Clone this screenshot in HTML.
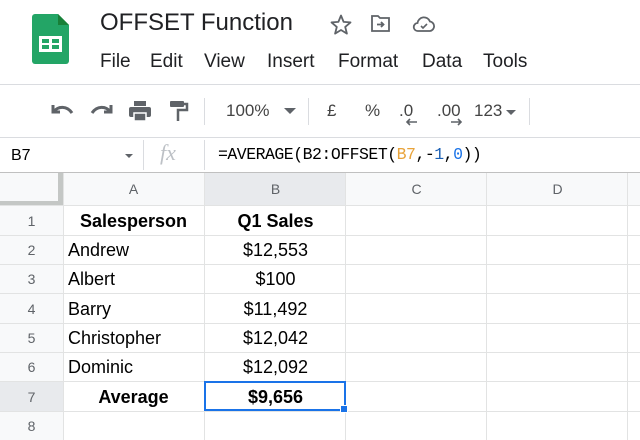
<!DOCTYPE html>
<html><head><style>
*{margin:0;padding:0;box-sizing:border-box}
body{width:640px;height:440px;overflow:hidden;background:#fff;font-family:"Liberation Sans",Arial,sans-serif;position:relative;color:#000}
.a{position:absolute}
.menu span{position:absolute;top:51px;font-size:19px;color:#202124}
.tb{color:#5f6368;font-size:16px}
.cell{position:absolute;font-size:18px;line-height:29px;white-space:nowrap}
.hl{position:absolute;background:#e2e3e3}
</style></head><body>
<svg class="a" style="left:32px;top:14px" width="37" height="50" viewBox="0 0 37 50">
<path d="M3 0H26L37 11V47A3 3 0 0 1 34 50H3A3 3 0 0 1 0 47V3A3 3 0 0 1 3 0Z" fill="#23a566"/>
<path d="M26 0V11H37Z" fill="#188038"/>
<rect x="7" y="22" width="23" height="16" fill="#fff"/>
<rect x="10" y="25" width="7" height="4" fill="#23a566"/><rect x="20" y="25" width="7" height="4" fill="#23a566"/>
<rect x="10" y="31" width="7" height="4" fill="#23a566"/><rect x="20" y="31" width="7" height="4" fill="#23a566"/>
</svg>
<div class="a" style="left:100px;top:9px;font-size:24px;color:#202124">OFFSET Function</div>
<svg class="a" style="left:329px;top:13px" width="24" height="24" viewBox="0 0 24 24"><path d="M12 2.5l2.6 6.4 6.9.5-5.3 4.5 1.7 6.7L12 17l-5.9 3.6 1.7-6.7L2.5 9.4l6.9-.5z" fill="none" stroke="#5f6368" stroke-width="1.8" stroke-linejoin="round"/></svg>
<svg class="a" style="left:370px;top:14px" width="22" height="20" viewBox="0 0 22 20"><path d="M2 2h6l2 2h9v13H2z" fill="none" stroke="#5f6368" stroke-width="1.8"/><path d="M7 10.5h6M11 8l2.5 2.5L11 13" stroke="#5f6368" stroke-width="1.8" fill="none"/></svg>
<svg class="a" style="left:412px;top:14px" width="24" height="20" viewBox="0 0 24 20"><path d="M6 17a4 4 0 0 1-.5-8A6.5 6.5 0 0 1 18 7.5a4.8 4.8 0 0 1 0 9.5z" fill="none" stroke="#5f6368" stroke-width="1.8"/><path d="M9 12l2 2 4-4" stroke="#5f6368" stroke-width="1.6" fill="none"/></svg>
<div class="menu">
<span style="left:100px">File</span><span style="left:150px">Edit</span><span style="left:204px">View</span><span style="left:267px">Insert</span><span style="left:338px">Format</span><span style="left:422px">Data</span><span style="left:483px">Tools</span>
</div>
<div class="a" style="left:0;top:84px;width:640px;height:1px;background:#dadce0"></div>
<svg class="a" style="left:49px;top:101px" width="26" height="18" viewBox="0 0 26 18"><path d="M4 4v7h7" fill="none" stroke="#5f6368" stroke-width="3"/><path d="M5 10.5C9 5 18 4.5 23 12" fill="none" stroke="#5f6368" stroke-width="3"/></svg>
<svg class="a" style="left:89px;top:101px" width="26" height="18" viewBox="0 0 26 18"><path d="M22 4v7h-7" fill="none" stroke="#5f6368" stroke-width="3"/><path d="M21 10.5C17 5 8 4.5 3 12" fill="none" stroke="#5f6368" stroke-width="3"/></svg>
<svg class="a" style="left:128px;top:100px" width="24" height="22" viewBox="0 0 24 22"><rect x="6" y="1" width="12" height="5" fill="#5f6368"/><rect x="1" y="7" width="22" height="10" rx="2" fill="#5f6368"/><rect x="6" y="13" width="12" height="8" fill="#5f6368" stroke="#fff" stroke-width="1.5"/></svg>
<svg class="a" style="left:169px;top:100px" width="20" height="22" viewBox="0 0 20 22"><rect x="1" y="1" width="14" height="6" rx="1" fill="#5f6368"/><path d="M15 4h3v6H9v11" fill="none" stroke="#5f6368" stroke-width="2.5"/></svg>
<div class="a" style="left:204px;top:98px;width:1px;height:27px;background:#dadce0"></div>
<div class="a tb" style="left:226px;top:101px;font-size:17px;color:#444">100%</div>
<svg class="a" style="left:284px;top:108px" width="12" height="7"><path d="M0 0h12L6 6z" fill="#5f6368"/></svg>
<div class="a" style="left:308px;top:98px;width:1px;height:27px;background:#dadce0"></div>
<div class="a tb" style="left:327px;top:101px;font-size:17px;color:#444">£</div>
<div class="a tb" style="left:365px;top:101px;font-size:17px;color:#444">%</div>
<div class="a tb" style="left:399px;top:101px;font-size:17px;color:#444">.0</div>
<svg class="a" style="left:405px;top:118px" width="12" height="8"><path d="M12 4H2M5 1L2 4l3 3" stroke="#5f6368" stroke-width="1.6" fill="none"/></svg>
<div class="a tb" style="left:437px;top:101px;font-size:17px;color:#444">.00</div>
<svg class="a" style="left:451px;top:118px" width="12" height="8"><path d="M0 4h10M7 1l3 3-3 3" stroke="#5f6368" stroke-width="1.6" fill="none"/></svg>
<div class="a tb" style="left:474px;top:101px;font-size:17px;color:#444">123</div>
<svg class="a" style="left:506px;top:110px" width="10" height="6"><path d="M0 0h10L5 5z" fill="#5f6368"/></svg>
<div class="a" style="left:529px;top:98px;width:1px;height:27px;background:#dadce0"></div>
<div class="a" style="left:0;top:137px;width:640px;height:1px;background:#dadce0"></div>
<div class="a" style="left:11px;top:147px;font-size:16px;color:#000">B7</div>
<svg class="a" style="left:125px;top:154px" width="8" height="5"><path d="M0 0h8L4 4z" fill="#5f6368"/></svg>
<div class="a" style="left:143px;top:140px;width:1px;height:30px;background:#dadce0"></div>
<div class="a" style="left:160px;top:140px;font-size:22px;font-style:italic;font-family:'Liberation Serif',serif;color:#bdc1c6">fx</div>
<div class="a" style="left:204px;top:140px;width:1px;height:30px;background:#dadce0"></div>
<div class="a" style="left:218px;top:145px;font-size:16.5px;font-family:'Liberation Mono',monospace;color:#000;letter-spacing:-0.5px">=AVERAGE(B2:OFFSET(<span style="color:#e8a33a">B7</span>,-<span style="color:#1a5fb4">1</span>,<span style="color:#1a73e8">0</span>))</div>
<div class="a" style="left:0;top:172px;width:640px;height:1px;background:#c0c0c0"></div>
<div class="a" style="left:0;top:173px;width:640px;height:32px;background:#f8f9fa"></div>
<div class="a" style="left:205px;top:173px;width:141px;height:32px;background:#e8eaed"></div>
<div class="a" style="left:0;top:205px;width:63px;height:235px;background:#f8f9fa"></div>
<div class="a" style="left:0;top:381px;width:63px;height:30px;background:#e8eaed"></div>
<div class="a" style="left:58px;top:173px;width:5px;height:32px;background:#c4c7c5"></div>
<div class="a" style="left:0;top:201px;width:63px;height:4px;background:#c4c7c5"></div>
<div class="hl" style="left:0;top:205px;width:640px;height:1px"></div>
<div class="hl" style="left:0;top:235px;width:640px;height:1px"></div>
<div class="hl" style="left:0;top:264px;width:640px;height:1px"></div>
<div class="hl" style="left:0;top:293px;width:640px;height:1px"></div>
<div class="hl" style="left:0;top:323px;width:640px;height:1px"></div>
<div class="hl" style="left:0;top:352px;width:640px;height:1px"></div>
<div class="hl" style="left:0;top:381px;width:640px;height:1px"></div>
<div class="hl" style="left:0;top:411px;width:640px;height:1px"></div>
<div class="hl" style="left:63px;top:173px;width:1px;height:267px"></div>
<div class="hl" style="left:204px;top:173px;width:1px;height:267px"></div>
<div class="hl" style="left:345px;top:173px;width:1px;height:267px"></div>
<div class="hl" style="left:486px;top:173px;width:1px;height:267px"></div>
<div class="hl" style="left:627px;top:173px;width:1px;height:267px"></div>
<div class="a" style="left:63px;width:141px;top:181px;text-align:center;font-size:14px;color:#5f6368">A</div>
<div class="a" style="left:205px;width:141px;top:181px;text-align:center;font-size:14px;color:#5f6368">B</div>
<div class="a" style="left:346px;width:141px;top:181px;text-align:center;font-size:14px;color:#5f6368">C</div>
<div class="a" style="left:487px;width:141px;top:181px;text-align:center;font-size:14px;color:#5f6368">D</div>
<div class="a" style="left:0;width:63px;top:213px;text-align:center;font-size:14px;color:#5f6368">1</div>
<div class="a" style="left:0;width:63px;top:242px;text-align:center;font-size:14px;color:#5f6368">2</div>
<div class="a" style="left:0;width:63px;top:271px;text-align:center;font-size:14px;color:#5f6368">3</div>
<div class="a" style="left:0;width:63px;top:301px;text-align:center;font-size:14px;color:#5f6368">4</div>
<div class="a" style="left:0;width:63px;top:330px;text-align:center;font-size:14px;color:#5f6368">5</div>
<div class="a" style="left:0;width:63px;top:359px;text-align:center;font-size:14px;color:#5f6368">6</div>
<div class="a" style="left:0;width:63px;top:389px;text-align:center;font-size:14px;color:#5f6368">7</div>
<div class="a" style="left:0;width:63px;top:418px;text-align:center;font-size:14px;color:#5f6368">8</div>
<div class="cell" style="left:63px;width:141px;top:207px;text-align:center;font-weight:bold">Salesperson</div>
<div class="cell" style="left:205px;width:141px;top:207px;text-align:center;font-weight:bold">Q1 Sales</div>
<div class="cell" style="left:68px;top:236px">Andrew</div>
<div class="cell" style="left:205px;width:141px;top:236px;text-align:center">$12,553</div>
<div class="cell" style="left:68px;top:265px">Albert</div>
<div class="cell" style="left:205px;width:141px;top:265px;text-align:center">$100</div>
<div class="cell" style="left:68px;top:295px">Barry</div>
<div class="cell" style="left:205px;width:141px;top:295px;text-align:center">$11,492</div>
<div class="cell" style="left:68px;top:324px">Christopher</div>
<div class="cell" style="left:205px;width:141px;top:324px;text-align:center">$12,042</div>
<div class="cell" style="left:68px;top:353px">Dominic</div>
<div class="cell" style="left:205px;width:141px;top:353px;text-align:center">$12,092</div>
<div class="cell" style="left:63px;width:141px;top:383px;text-align:center;font-weight:bold">Average</div>
<div class="cell" style="left:205px;width:141px;top:383px;text-align:center;font-weight:bold">$9,656</div>
<div class="a" style="left:204px;top:381px;width:142px;height:30px;border:2px solid #1a73e8"></div>
<div class="a" style="left:340px;top:405px;width:8px;height:8px;background:#1a73e8;border:1px solid #fff"></div>
</body></html>
